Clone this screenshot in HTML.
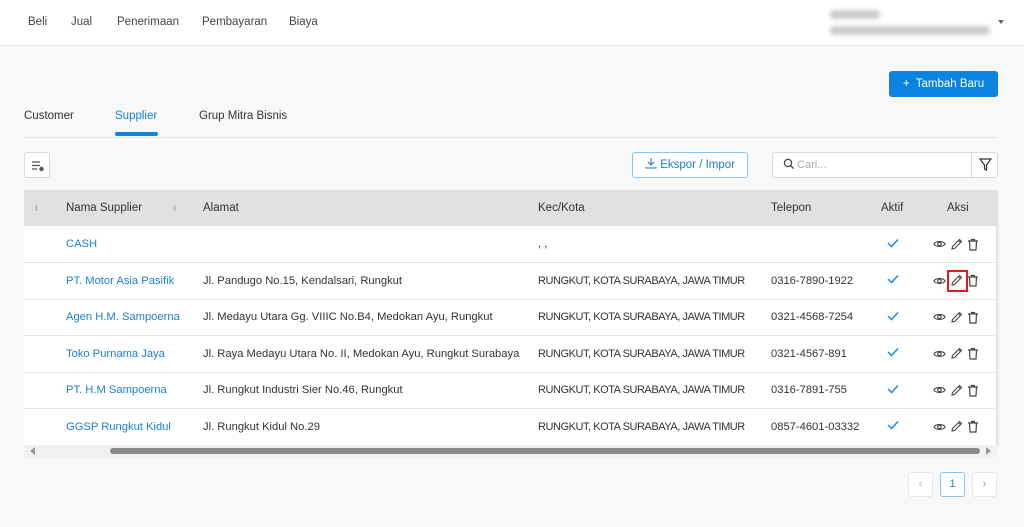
<!DOCTYPE html>
<html><head><style>
*{box-sizing:border-box;margin:0;padding:0}
body{width:1024px;height:527px;background:#f8f8f8;font-family:"Liberation Sans",sans-serif;font-size:11px;color:#333;position:relative;overflow:hidden}
.hdr{position:absolute;left:0;top:0;width:1024px;height:46px;background:#fff;border-bottom:1px solid #e6e6e6}
.hdr span{position:absolute;top:16px;font-size:11.5px;color:#444}
.abs{position:absolute}
.btn{left:889px;top:71px;width:109px;height:26px;background:#0a84e0;border-radius:3px;color:#fff;font-size:11.5px;line-height:26px;text-align:center}
.tab{top:110px;font-size:11.5px;color:#333}
.wbox{background:#fff;border:1px solid #d9d9d9;border-radius:3px}
table{position:absolute;left:24px;top:190px;width:973px;border-collapse:collapse;background:#fff;table-layout:fixed}
th{background:#e1e1e1;height:36px;text-align:left;font-weight:normal;font-size:11.5px;color:#333;padding-left:13px;white-space:nowrap;overflow:hidden}
td{height:36.5px;border-bottom:1px solid #e8e8e8;padding-left:13px;font-size:11.2px;color:#333;white-space:nowrap}
td.n{color:#1a7fd4}
td.k{letter-spacing:-0.45px;font-size:11px}
.ck{text-align:left;padding-left:19px}
.ax{padding-left:15px}
.ax svg{vertical-align:middle;margin-right:4px}
</style></head><body>
<div class="hdr">
<span style="left:28px">Beli</span><span style="left:71px">Jual</span><span style="left:117px">Penerimaan</span><span style="left:202px">Pembayaran</span><span style="left:289px">Biaya</span>
<div class="abs" style="left:830px;top:10px;width:50px;height:9px;background:#ccc;border-radius:4px;filter:blur(2px)"></div>
<div class="abs" style="left:830px;top:26px;width:160px;height:9px;background:#ccc;border-radius:4px;filter:blur(2px)"></div>
<div class="abs" style="left:998px;top:20px;border:3px solid transparent;border-top:4px solid #666"></div>
</div>
<div class="abs btn">+&nbsp; Tambah Baru</div>
<div class="abs tab" style="left:24px">Customer</div>
<div class="abs tab" style="left:115px;color:#1a7fd4">Supplier</div>
<div class="abs tab" style="left:199px">Grup Mitra Bisnis</div>
<div class="abs" style="left:115px;top:132px;width:43px;height:4px;background:#0a84e0;border-radius:2px"></div>
<div class="abs" style="left:24px;top:137px;width:974px;height:1px;background:#e3e3e3"></div>
<div class="abs wbox" style="left:24px;top:152px;width:26px;height:26px">
<svg width="26" height="26"><path d="M7 9h8M7 12.5h8M7 16h5" stroke="#555" stroke-width="1.2"/><circle cx="16.5" cy="16" r="2.2" fill="#555"/></svg></div>
<div class="abs wbox" style="left:632px;top:152px;width:116px;height:26px;border-color:#8cc4ef;color:#1a7fd4;line-height:24px;text-align:center;font-size:11.5px">
<svg width="12" height="12" style="vertical-align:-1px"><path d="M6 1v7M3 5l3 3 3-3M1 10v1h10v-1" stroke="#1a7fd4" fill="none" stroke-width="1.1"/></svg> Ekspor / Impor</div>
<div class="abs wbox" style="left:772px;top:152px;width:226px;height:26px;color:#aaa;line-height:24px;padding-left:10px">
<svg width="11" height="11" style="vertical-align:-1px"><circle cx="5" cy="5" r="3.6" stroke="#444" stroke-width="1.3" fill="none"/><path d="M7.5 7.5l3 3" stroke="#444" stroke-width="1.3"/></svg> Cari...
<div class="abs" style="left:198px;top:-1px;width:27px;height:26px;border-left:1px solid #d9d9d9"><svg width="27" height="26"><path d="M8 7h11l-4.5 6v5l-2-1v-4z" fill="none" stroke="#333" stroke-width="1.2"/></svg></div></div>
<table>
<colgroup><col style="width:29px"><col style="width:137px"><col style="width:335px"><col style="width:233px"><col style="width:110px"><col style="width:50px"><col></colgroup>
<tr><th style="color:#bbb;font-size:8px;padding-left:9px">⬍</th><th>Nama Supplier <span style="color:#bbb;font-size:8px;margin-left:26px">⬍</span></th><th>Alamat</th><th>Kec/Kota</th><th>Telepon</th><th>Aktif</th><th style="padding-left:29px">Aksi</th></tr>
<tr><td></td><td class="n">CASH</td><td></td><td>, ,</td><td></td><td class="ck">C</td><td class="ax">EYE</td></tr>
<tr><td></td><td class="n">PT. Motor Asia Pasifik</td><td>Jl. Pandugo No.15, Kendalsari, Rungkut</td><td class="k">RUNGKUT, KOTA SURABAYA, JAWA TIMUR</td><td>0316-7890-1922</td><td class="ck">C</td><td class="ax">EYE</td></tr>
<tr><td></td><td class="n">Agen H.M. Sampoerna</td><td>Jl. Medayu Utara Gg. VIIIC No.B4, Medokan Ayu, Rungkut</td><td class="k">RUNGKUT, KOTA SURABAYA, JAWA TIMUR</td><td>0321-4568-7254</td><td class="ck">C</td><td class="ax">EYE</td></tr>
<tr><td></td><td class="n">Toko Purnama Jaya</td><td>Jl. Raya Medayu Utara No. II, Medokan Ayu, Rungkut Surabaya</td><td class="k">RUNGKUT, KOTA SURABAYA, JAWA TIMUR</td><td>0321-4567-891</td><td class="ck">C</td><td class="ax">EYE</td></tr>
<tr><td></td><td class="n">PT. H.M Sampoerna</td><td>Jl. Rungkut Industri Sier No.46, Rungkut</td><td class="k">RUNGKUT, KOTA SURABAYA, JAWA TIMUR</td><td>0316-7891-755</td><td class="ck">C</td><td class="ax">EYE</td></tr>
<tr><td></td><td class="n">GGSP Rungkut Kidul</td><td>Jl. Rungkut Kidul No.29</td><td class="k">RUNGKUT, KOTA SURABAYA, JAWA TIMUR</td><td>0857-4601-03332</td><td class="ck">C</td><td class="ax">EYE</td></tr>
</table>
<div class="abs" style="left:996px;top:190px;width:4px;height:256px;background:linear-gradient(90deg,#ddd,#f8f8f8)"></div>
<div class="abs" style="left:24px;top:445px;width:973px;height:12px;background:#f1f1f1"></div>
<div class="abs" style="left:110px;top:448px;width:870px;height:6px;background:#8a8a8a;border-radius:3px"></div>
<div class="abs" style="left:30px;top:447px;border:4px solid transparent;border-right:5px solid #999;border-left:0"></div>
<div class="abs" style="left:986px;top:447px;border:4px solid transparent;border-left:5px solid #999;border-right:0"></div>
<div class="abs" style="left:947px;top:270px;width:21px;height:22px;border:2px solid #e01b1b"></div>
<div class="abs wbox" style="left:908px;top:472px;width:25px;height:25px;color:#bbb;text-align:center;line-height:23px;border-color:#e8e8e8">‹</div>
<div class="abs wbox" style="left:940px;top:472px;width:25px;height:25px;color:#1a7fd4;text-align:center;line-height:23px;border-color:#8cc4ef">1</div>
<div class="abs wbox" style="left:972px;top:472px;width:25px;height:25px;color:#999;text-align:center;line-height:23px;border-color:#e8e8e8">›</div>
<script>
var ic='<svg width="13" height="12" viewBox="0 0 14 12"><path d="M1 6C3 2.5 11 2.5 13 6 11 9.5 3 9.5 1 6z" fill="none" stroke="#444" stroke-width="1.2"/><circle cx="7" cy="6" r="1.8" fill="none" stroke="#444" stroke-width="1.2"/></svg><svg width="13" height="13" viewBox="0 0 13 13"><path d="M2 11l.5-2.5L9.5 1.5l2 2-7 7zM8.5 2.5l2 2" fill="none" stroke="#444" stroke-width="1.1"/></svg><svg width="12" height="13" viewBox="0 0 12 13"><path d="M1 3h10M4.5 3V1.5h3V3M2.5 3l.5 9h6l.5-9" fill="none" stroke="#444" stroke-width="1.2"/></svg>';
var ck='<svg width="12" height="10" viewBox="0 0 12 10"><path d="M1 5l3.5 3.5L11 1.5" fill="none" stroke="#1a8ae5" stroke-width="1.5"/></svg>';
document.querySelectorAll('td.ax').forEach(function(e){e.innerHTML=ic;});
document.querySelectorAll('td.ck').forEach(function(e){e.innerHTML=ck;});
</script>
</body></html>
